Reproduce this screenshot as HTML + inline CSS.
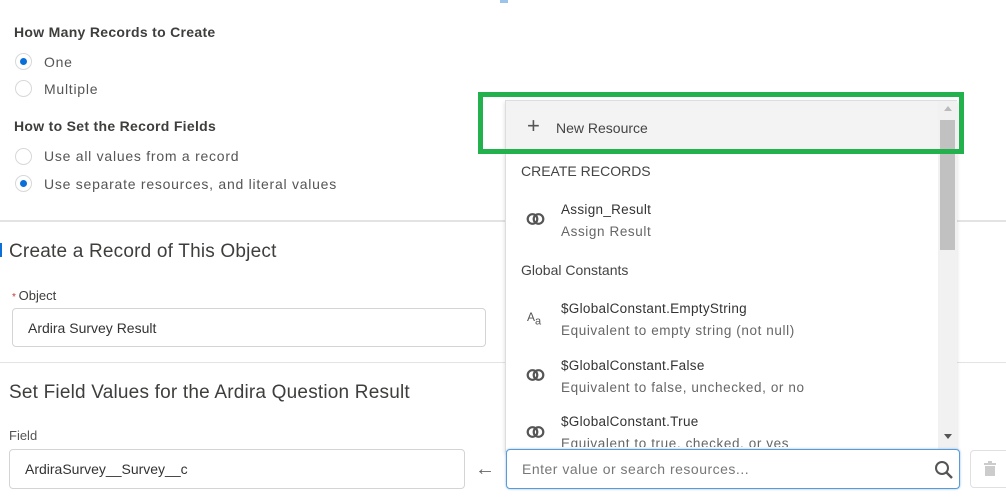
<!DOCTYPE html>
<html><head><style>
*{box-sizing:border-box;margin:0;padding:0}
body{width:1006px;height:500px;overflow:hidden;background:#fff;font-family:"Liberation Sans",sans-serif;color:#3e3e3c;position:relative}
.a{position:absolute;white-space:nowrap}
.h{font-weight:bold;font-size:14px;letter-spacing:0.3px;color:#3e3e3c}
.r{font-size:14px;letter-spacing:0.75px;color:#555}
.radio{position:absolute;width:17px;height:17px;border:1px solid #d8d8d8;border-radius:50%;background:#fff}
.radio.on::after{content:"";position:absolute;left:4px;top:4px;width:7px;height:7px;border-radius:50%;background:#0b6fd8}
.t{font-size:19px;letter-spacing:0.2px;color:#3e3e3c}
.inp{position:absolute;border:1px solid #d4d4d4;border-radius:4px;background:#fff;font-size:14px;color:#333;padding-left:15px;display:flex;align-items:center}
.lab{font-size:13px;color:#3e3e3c}
.it1{font-size:13.5px;letter-spacing:0.3px;color:#333}
.it2{font-size:13.5px;letter-spacing:0.6px;color:#666}
</style></head><body>
<div class="a" style="left:500px;top:0;width:8px;height:3px;background:#9cc3e8"></div>
<div class="a h" style="left:14px;top:24px">How Many Records to Create</div>
<div class="radio on" style="left:15px;top:53px"></div><div class="a r" style="left:44px;top:54px">One</div>
<div class="radio" style="left:15px;top:80px"></div><div class="a r" style="left:44px;top:81px">Multiple</div>
<div class="a h" style="left:14px;top:118px">How to Set the Record Fields</div>
<div class="radio" style="left:15px;top:148px"></div><div class="a r" style="left:44px;top:148px">Use all values from a record</div>
<div class="radio on" style="left:15px;top:175px"></div><div class="a r" style="left:44px;top:176px">Use separate resources, and literal values</div>
<div class="a" style="left:0;top:220px;width:1006px;height:2px;background:#e3e3e3"></div>
<div class="a" style="left:0;top:243px;width:2px;height:14px;background:#0b6fd8"></div>
<div class="a t" style="left:9px;top:241px">Create a Record of This Object</div>
<div class="a lab" style="left:12px;top:288px"><span style="color:#c23934;font-size:10px">* </span>Object</div>
<div class="inp" style="left:12px;top:308px;width:474px;height:39px">Ardira Survey Result</div>
<div class="a" style="left:0;top:362px;width:1006px;height:1px;background:#e3e3e3"></div>
<div class="a t" style="left:9px;top:382px">Set Field Values for the Ardira Question Result</div>
<div class="a lab" style="left:9px;top:428px;color:#555">Field</div>
<div class="inp" style="left:9px;top:449px;width:456px;height:40px">ArdiraSurvey__Survey__c</div>
<div class="a" style="left:475px;top:458px;font-size:20px;color:#666">&#8592;</div>
<!-- dropdown -->
<div class="a" style="left:505px;top:100px;width:452px;height:352px;background:#fff;border:1px solid #ddd;box-shadow:0 2px 4px rgba(0,0,0,.15)"></div>
<div class="a" style="left:506px;top:101px;width:432px;height:52px;background:#f3f3f3"></div>
<div class="a" style="left:527px;top:113px;font-size:22px;color:#555">+</div>
<div class="a" style="left:556px;top:120px;font-size:14px;color:#444">New Resource</div>
<div class="a" style="left:521px;top:163px;font-size:14px;color:#444">CREATE RECORDS</div>
<svg class="a" style="left:526px;top:212px" width="20" height="14" viewBox="0 0 20 14"><circle cx="6.5" cy="7" r="4.8" fill="none" stroke="#555" stroke-width="2.2"/><circle cx="12.5" cy="7" r="4.8" fill="none" stroke="#555" stroke-width="2.2"/></svg>
<div class="a it1" style="left:561px;top:202px">Assign_Result</div>
<div class="a it2" style="left:561px;top:224px">Assign Result</div>
<div class="a" style="left:521px;top:262px;font-size:14px;color:#444">Global Constants</div>
<div class="a" style="left:527px;top:310px;font-size:12px;color:#555">A<sub style="font-size:11px">a</sub></div>
<div class="a it1" style="left:561px;top:301px">$GlobalConstant.EmptyString</div>
<div class="a it2" style="left:561px;top:323px">Equivalent to empty string (not null)</div>
<svg class="a" style="left:526px;top:368px" width="20" height="14" viewBox="0 0 20 14"><circle cx="6.5" cy="7" r="4.8" fill="none" stroke="#555" stroke-width="2.2"/><circle cx="12.5" cy="7" r="4.8" fill="none" stroke="#555" stroke-width="2.2"/></svg>
<div class="a it1" style="left:561px;top:358px">$GlobalConstant.False</div>
<div class="a it2" style="left:561px;top:380px">Equivalent to false, unchecked, or no</div>
<svg class="a" style="left:526px;top:425px" width="20" height="14" viewBox="0 0 20 14"><circle cx="6.5" cy="7" r="4.8" fill="none" stroke="#555" stroke-width="2.2"/><circle cx="12.5" cy="7" r="4.8" fill="none" stroke="#555" stroke-width="2.2"/></svg>
<div class="a it1" style="left:561px;top:414px">$GlobalConstant.True</div>
<div class="a it2" style="left:561px;top:436px;height:11px;overflow:hidden">Equivalent to true, checked, or yes</div>
<div class="a" style="left:938px;top:101px;width:19px;height:350px;background:#f1f1f1"></div>
<div class="a" style="left:940px;top:120px;width:15px;height:130px;background:#c1c1c1"></div>
<div class="a" style="left:944px;top:106px;width:0;height:0;border-left:4px solid transparent;border-right:4px solid transparent;border-bottom:5px solid #bbb"></div>
<div class="a" style="left:944px;top:434px;width:0;height:0;border-left:4px solid transparent;border-right:4px solid transparent;border-top:5px solid #555"></div>
<div class="a" style="left:478px;top:92px;width:486px;height:62px;border:5px solid #22b14c"></div>
<div class="a" style="left:506px;top:449px;width:454px;height:40px;border:1px solid #5a9bd5;border-radius:4px;box-shadow:0 0 2px #8ab8e8;background:#fff"></div>
<div class="a" style="left:522px;top:461px;font-size:14px;letter-spacing:0.5px;color:#777">Enter value or search resources...</div>
<svg class="a" style="left:933px;top:459px" width="22" height="22" viewBox="0 0 22 22"><circle cx="9" cy="9" r="6" fill="none" stroke="#555" stroke-width="2"/><line x1="13.5" y1="13.5" x2="19" y2="19" stroke="#555" stroke-width="2.4"/></svg>
<div class="a" style="left:970px;top:450px;width:40px;height:38px;border:1px solid #e0e0e0;border-radius:4px"></div>
<svg class="a" style="left:983px;top:461px" width="14" height="16" viewBox="0 0 14 16"><rect x="1" y="2" width="12" height="2" fill="#ccc"/><rect x="5" y="0" width="4" height="2" fill="#ccc"/><rect x="2" y="5" width="10" height="10" fill="#ccc"/></svg>
</body></html>
